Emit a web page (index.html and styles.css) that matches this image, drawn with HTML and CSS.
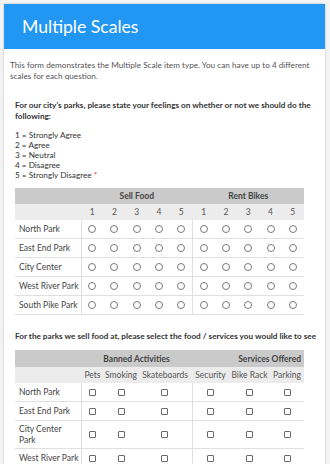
FILE: index.html
```html
<!DOCTYPE html>
<html lang="en">
<head>
<meta charset="utf-8">
<title>Multiple Scales</title>
<link rel="stylesheet" href="styles.css">
</head>
<body>
<div class="card">
  <div class="card-header">Multiple Scales</div>
  <div class="card-body">
    <p class="intro">This form demonstrates the Multiple Scale item type. You can have up to 4 different scales for each question.</p>

    <div class="question">
      <div class="q-label">For our city's parks, please state your feelings on whether or not we should do the following:</div>
      <div class="q-legend">
        <div>1 = Strongly Agree</div>
        <div>2 = Agree</div>
        <div>3 = Neutral</div>
        <div>4 = Disagree</div>
        <div>5 = Strongly Disagree <span class="req">*</span></div>
      </div>
      <table class="scale scale-radio">
        <colgroup><col class="c-label"><col span="10"></colgroup>
        <thead>
          <tr class="grp"><th></th><th colspan="5">Sell Food</th><th colspan="5">Rent Bikes</th></tr>
          <tr class="sub"><th></th><th>1</th><th>2</th><th>3</th><th>4</th><th>5</th><th>1</th><th>2</th><th>3</th><th>4</th><th>5</th></tr>
        </thead>
        <tbody>
          <tr><th>North Park</th><td class="g"><input type="radio" name="a1"></td><td><input type="radio" name="a1"></td><td><input type="radio" name="a1"></td><td><input type="radio" name="a1"></td><td><input type="radio" name="a1"></td><td class="g"><input type="radio" name="b1"></td><td><input type="radio" name="b1"></td><td><input type="radio" name="b1"></td><td><input type="radio" name="b1"></td><td><input type="radio" name="b1"></td></tr>
          <tr><th>East End Park</th><td class="g"><input type="radio" name="a2"></td><td><input type="radio" name="a2"></td><td><input type="radio" name="a2"></td><td><input type="radio" name="a2"></td><td><input type="radio" name="a2"></td><td class="g"><input type="radio" name="b2"></td><td><input type="radio" name="b2"></td><td><input type="radio" name="b2"></td><td><input type="radio" name="b2"></td><td><input type="radio" name="b2"></td></tr>
          <tr><th>City Center</th><td class="g"><input type="radio" name="a3"></td><td><input type="radio" name="a3"></td><td><input type="radio" name="a3"></td><td><input type="radio" name="a3"></td><td><input type="radio" name="a3"></td><td class="g"><input type="radio" name="b3"></td><td><input type="radio" name="b3"></td><td><input type="radio" name="b3"></td><td><input type="radio" name="b3"></td><td><input type="radio" name="b3"></td></tr>
          <tr><th>West River Park</th><td class="g"><input type="radio" name="a4"></td><td><input type="radio" name="a4"></td><td><input type="radio" name="a4"></td><td><input type="radio" name="a4"></td><td><input type="radio" name="a4"></td><td class="g"><input type="radio" name="b4"></td><td><input type="radio" name="b4"></td><td><input type="radio" name="b4"></td><td><input type="radio" name="b4"></td><td><input type="radio" name="b4"></td></tr>
          <tr><th>South Pike Park</th><td class="g"><input type="radio" name="a5"></td><td><input type="radio" name="a5"></td><td><input type="radio" name="a5"></td><td><input type="radio" name="a5"></td><td><input type="radio" name="a5"></td><td class="g"><input type="radio" name="b5"></td><td><input type="radio" name="b5"></td><td><input type="radio" name="b5"></td><td><input type="radio" name="b5"></td><td><input type="radio" name="b5"></td></tr>
        </tbody>
      </table>
    </div>

    <div class="question q2">
      <div class="q-label">For the parks we sell food at, please select the food / services you would like to see</div>
      <table class="scale scale-check">
        <colgroup><col class="c-label"><col class="c-pets"><col class="c-smoking"><col class="c-skate"><col class="c-security"><col class="c-bike"><col class="c-parking"></colgroup>
        <thead>
          <tr class="grp"><th></th><th colspan="3">Banned Activities</th><th colspan="3" class="right">Services Offered</th></tr>
          <tr class="sub"><th></th><th>Pets</th><th>Smoking</th><th>Skateboards</th><th>Security</th><th>Bike Rack</th><th>Parking</th></tr>
        </thead>
        <tbody>
          <tr><th>North Park</th><td class="g"><input type="checkbox"></td><td><input type="checkbox"></td><td><input type="checkbox"></td><td class="g"><input type="checkbox"></td><td><input type="checkbox"></td><td><input type="checkbox"></td></tr>
          <tr><th>East End Park</th><td class="g"><input type="checkbox"></td><td><input type="checkbox"></td><td><input type="checkbox"></td><td class="g"><input type="checkbox"></td><td><input type="checkbox"></td><td><input type="checkbox"></td></tr>
          <tr><th>City Center<br>Park</th><td class="g"><input type="checkbox"></td><td><input type="checkbox"></td><td><input type="checkbox"></td><td class="g"><input type="checkbox"></td><td><input type="checkbox"></td><td><input type="checkbox"></td></tr>
          <tr><th>West River Park</th><td class="g"><input type="checkbox"></td><td><input type="checkbox"></td><td><input type="checkbox"></td><td class="g"><input type="checkbox"></td><td><input type="checkbox"></td><td><input type="checkbox"></td></tr>
          <tr><th>South Pike Park</th><td class="g"><input type="checkbox"></td><td><input type="checkbox"></td><td><input type="checkbox"></td><td class="g"><input type="checkbox"></td><td><input type="checkbox"></td><td><input type="checkbox"></td></tr>
        </tbody>
      </table>
    </div>
  </div>
</div>
</body>
</html>
```

FILE: styles.css
```css
html, body {
  margin: 0;
  padding: 0;
}
body {
  background: #f3f3f3;
  font-family: Lato, "Open Sans", "Liberation Sans", sans-serif;
  color: #555;
  padding: 4px 5px 0 4px;
  overflow: hidden;
}
.card {
  background: #fff;
  box-shadow: 0 0 2px rgba(0, 0, 0, 0.25);
  min-height: 470px;
}
.card-header {
  background: #2196f3;
  color: #fff;
  height: 45px;
  display: flex;
  align-items: center;
  padding-left: 18px;
  font-size: 17.6px;
}
.card-body {
  padding: 0 5px;
}
.intro {
  margin: 0;
  padding: 11px 0 0 1px;
  font-size: 8.2px;
  line-height: 11px;
  color: #555;
}
.question {
  padding: 18px 0 0 6px;
}
.q-label {
  font-weight: bold;
  font-size: 8.2px;
  line-height: 11px;
  color: #333;
}
.q-legend {
  margin-top: 8px;
  font-size: 8.2px;
  line-height: 10px;
  color: #333;
}
.req {
  color: #e53935;
}
.scale {
  margin-top: 8px;
  width: 289px;
  border-collapse: collapse;
  table-layout: fixed;
  font-size: 8.5px;
  color: #444;
}
.c-label { width: 66px; }
.scale th, .scale td {
  padding: 0;
  text-align: center;
}
.grp th {
  background: #cacaca;
  height: 16px;
  font-weight: bold;
  color: #444;
}
.grp th.right {
  text-align: right;
  padding-right: 3px;
}
.sub th {
  background: #ececec;
  height: 16px;
  font-weight: normal;
  color: #555;
}
.scale tbody th {
  text-align: left;
  font-weight: normal;
  padding: 3px 0 3px 4px;
  height: 12px;
  line-height: 10.5px;
  border-right: 1px solid #e0e0e0;
  color: #444;
}
.scale tbody tr {
  border-bottom: 1px solid #e0e0e0;
}
.scale td.g {
  border-left: 1px solid #e0e0e0;
}
.scale input {
  -webkit-appearance: none;
  appearance: none;
  display: block;
  margin: 0 auto;
  box-sizing: border-box;
  background: #fff;
}
.scale input[type="radio"] {
  width: 8px;
  height: 8px;
  border: 1px solid #7a7a7a;
  border-radius: 50%;
}
.scale input[type="checkbox"] {
  width: 7px;
  height: 7px;
  border: 1px solid #6a6a6a;
  border-radius: 1px;
}
.q2 {
  padding-top: 16px;
}
.scale-check .grp th {
  height: 17px;
}
.c-pets { width: 23px; }
.c-smoking { width: 34px; }
.c-skate { width: 54px; }
.c-security { width: 37px; }
.c-bike { width: 41px; }
.c-parking { width: 34px; }
.scale-check .sub th {
  white-space: nowrap;
}
```
